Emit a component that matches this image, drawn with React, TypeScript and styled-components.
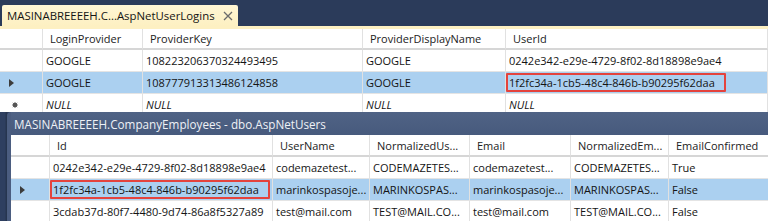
import React from "react";
import styled, { createGlobalStyle } from "styled-components";

const GlobalStyle = createGlobalStyle`
  html, body {
    margin: 0;
    padding: 0;
    background: #2b3b5a;
  }
  body {
    font-family: "Open Sans", "Liberation Sans", sans-serif;
    font-size: 11px;
    color: #141414;
    overflow: hidden;
  }
`;

const Screen = styled.div`
  width: 768px;
  height: 221px;
  overflow: hidden;
  display: flex;
  flex-direction: column;
  background: #2b3b5a;
`;

const TabStrip = styled.div`
  height: 26px;
  padding: 5px 0 0 2px;
  box-sizing: border-box;
  display: flex;
  align-items: flex-end;
`;

const Tab = styled.div`
  width: 236px;
  height: 21px;
  box-sizing: border-box;
  padding: 0 5px 0 5px;
  display: flex;
  align-items: center;
  justify-content: space-between;
  background: linear-gradient(#fff6d4, #fdf0c2);
  border-radius: 2px 2px 0 0;
  color: #141414;
  font-size: 11.4px;
  white-space: nowrap;
`;

const TabAccent = styled.div`
  height: 3px;
  background: #fdf0c2;
  flex-shrink: 0;
`;

const DocPane = styled.div`
  height: 83px;
  overflow: hidden;
  background: #ffffff;
  flex-shrink: 0;
`;

const Row = styled.div<{ $height: number; $selected?: boolean }>`
  display: flex;
  height: ${(p) => p.$height}px;
  background: ${(p) => (p.$selected ? "#abd0f0" : "#ffffff")};
`;

const Cell = styled.div<{ $width: number; $header?: boolean; $italic?: boolean }>`
  width: ${(p) => p.$width}px;
  flex-shrink: 0;
  box-sizing: border-box;
  display: flex;
  align-items: center;
  padding: 0 0 0 ${(p) => (p.$header ? 7 : 3)}px;
  border-right: 1px solid #e1e1e1;
  border-bottom: ${(p) => (p.$header ? "2px solid #d6d6d6" : "1px solid #e4e4e4")};
  white-space: nowrap;
  overflow: hidden;
  font-style: ${(p) => (p.$italic ? "italic" : "normal")};
  color: ${(p) => (p.$header ? "#222222" : "#141414")};
`;

const RowHead = styled(Cell)`
  padding-left: 9px;
`;

const Marked = styled.span`
  display: inline-flex;
  align-items: center;
  height: 19px;
  box-sizing: border-box;
  margin-left: -3px;
  padding: 0 9px 0 1px;
  border: 2px solid #e4433d;
  border-radius: 1px;
`;

const WindowArea = styled.div`
  flex: 1;
  display: flex;
  min-height: 0;
`;

const Gutter = styled.div`
  width: 7px;
  flex-shrink: 0;
  box-sizing: border-box;
  border-left: 5px solid #2e3f60;
  border-right: 1px solid #26354f;
  background: #2a3a58;
`;

const Window = styled.div`
  flex: 1;
  display: flex;
  flex-direction: column;
  min-width: 0;
  background: #4b5d80;
  border-radius: 4px 0 0 0;
  padding-left: 4px;
  overflow: hidden;
`;

const TitleBar = styled.div`
  height: 23px;
  flex-shrink: 0;
  display: flex;
  align-items: center;
  padding-left: 3px;
  background: linear-gradient(#506385, #475a7d);
  color: #eef1f6;
  font-size: 11.7px;
  white-space: nowrap;
`;

const GridPane = styled.div`
  flex: 1;
  background: #ffffff;
  overflow: hidden;
`;

const Arrow = () => (
  <svg width="5" height="8" viewBox="0 0 5 8">
    <path d="M0 0 L5 4 L0 8 Z" fill="#3c3c3c" />
  </svg>
);

const Star = () => (
  <svg width="6" height="6" viewBox="0 0 6 6" style={{ marginLeft: 3 }}>
    <circle cx="3" cy="3" r="2.2" fill="#555" />
    <path d="M3 0 V6 M0 3 H6 M0.8 0.8 L5.2 5.2 M5.2 0.8 L0.8 5.2" stroke="#555" strokeWidth="0.8" />
  </svg>
);

const CloseIcon = () => (
  <svg width="10" height="10" viewBox="0 0 10 10">
    <path d="M1 1 L9 9 M9 1 L1 9" stroke="#6b6b6b" strokeWidth="1.3" />
  </svg>
);

type Mark = "none" | "arrow" | "star";
type GridRow = { mark: Mark; cells: string[]; marked?: number; italic?: boolean };

const loginCols = [
  { title: "", w: 43 },
  { title: "LoginProvider", w: 100 },
  { title: "ProviderKey", w: 220 },
  { title: "ProviderDisplayName", w: 143 },
  { title: "UserId", w: 262 },
];

const loginRows: GridRow[] = [
  { mark: "none", cells: ["GOOGLE", "108223206370324493495", "GOOGLE", "0242e342-e29e-4729-8f02-8d18898e9ae4"] },
  { mark: "arrow", cells: ["GOOGLE", "108777913313486124858", "GOOGLE", "1f2fc34a-1cb5-48c4-846b-b90295f62daa"], marked: 3 },
  { mark: "star", cells: ["NULL", "NULL", "NULL", "NULL"], italic: true },
];

const userCols = [
  { title: "", w: 39 },
  { title: "Id", w: 223 },
  { title: "UserName", w: 97 },
  { title: "NormalizedUs...", w: 100 },
  { title: "Email", w: 101 },
  { title: "NormalizedEm...", w: 98 },
  { title: "EmailConfirmed", w: 110 },
];

const userRows: GridRow[] = [
  {
    mark: "none",
    cells: ["0242e342-e29e-4729-8f02-8d18898e9ae4", "codemazetest...", "CODEMAZETES...", "codemazetest...", "CODEMAZETES...", "True"],
  },
  {
    mark: "arrow",
    cells: ["1f2fc34a-1cb5-48c4-846b-b90295f62daa", "marinkospasoje...", "MARINKOSPAS...", "marinkospasoje...", "MARINKOSPAS...", "False"],
    marked: 0,
  },
  {
    mark: "none",
    cells: ["3cdab37d-80f7-4480-9d74-86a8f5327a89", "test@mail.com", "TEST@MAIL.CO...", "test@mail.com", "TEST@MAIL.CO...", "False"],
  },
];

function DataGrid({
  cols,
  rows,
  headHeight,
}: {
  cols: { title: string; w: number }[];
  rows: GridRow[];
  headHeight: number;
}) {
  return (
    <>
      <Row $height={headHeight}>
        {cols.map((c, i) => (
          <Cell key={i} $width={c.w} $header>
            {c.title}
          </Cell>
        ))}
      </Row>
      {rows.map((r, ri) => (
        <Row key={ri} $height={22} $selected={r.mark === "arrow"}>
          <RowHead $width={cols[0].w}>
            {r.mark === "arrow" && <Arrow />}
            {r.mark === "star" && <Star />}
          </RowHead>
          {r.cells.map((text, ci) => (
            <Cell key={ci} $width={cols[ci + 1].w} $italic={r.italic}>
              {r.marked === ci ? <Marked>{text}</Marked> : text}
            </Cell>
          ))}
        </Row>
      ))}
    </>
  );
}

export default function App() {
  return (
    <Screen>
      <GlobalStyle />
      <TabStrip>
        <Tab>
          <span>MASINABREEEEH.C...AspNetUserLogins</span>
          <CloseIcon />
        </Tab>
      </TabStrip>
      <TabAccent />
      <DocPane>
        <DataGrid cols={loginCols} rows={loginRows} headHeight={21} />
      </DocPane>
      <WindowArea>
        <Gutter />
        <Window>
          <TitleBar>MASINABREEEEH.CompanyEmployees - dbo.AspNetUsers</TitleBar>
          <GridPane>
            <DataGrid cols={userCols} rows={userRows} headHeight={22} />
          </GridPane>
        </Window>
      </WindowArea>
    </Screen>
  );
}
